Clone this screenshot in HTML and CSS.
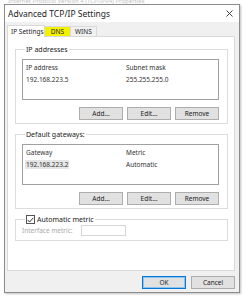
FILE: index.html
```html
<!DOCTYPE html>
<html>
<head>
<meta charset="utf-8">
<link rel="stylesheet" href="styles.css">
</head>
<body>
<div class="desk">
  <div class="parent-title">Internet Protocol Version 4 (TCP/IPv4) Properties</div>
  <div class="dialog">
    <div class="titlebar">
      <span class="title">Advanced TCP/IP Settings</span>
      <svg class="close" width="7" height="7" viewBox="0 0 7 7"><path d="M0.5 0.5 L6.5 6.5 M6.5 0.5 L0.5 6.5" stroke="#333" stroke-width="0.9"/></svg>
    </div>
    <div class="client">
      <div class="tabs">
        <div class="tab active">IP Settings</div>
        <div class="tab dns">DNS</div>
        <div class="tab">WINS</div>
      </div>
      <div class="panel">
        <fieldset class="group g1">
          <legend>IP addresses</legend>
          <div class="list">
            <div class="row head"><span class="c1">IP address</span><span class="c2">Subnet mask</span></div>
            <div class="row"><span class="c1">192.168.223.5</span><span class="c2">255.255.255.0</span></div>
          </div>
          <div class="btns">
            <button class="btn">Add...</button>
            <button class="btn">Edit...</button>
            <button class="btn">Remove</button>
          </div>
        </fieldset>
        <fieldset class="group g2">
          <legend>Default gateways:</legend>
          <div class="list">
            <div class="row head"><span class="c1">Gateway</span><span class="c2">Metric</span></div>
            <div class="row"><span class="c1"><span class="sel">192.168.223.2</span></span><span class="c2">Automatic</span></div>
          </div>
          <div class="btns">
            <button class="btn">Add...</button>
            <button class="btn">Edit...</button>
            <button class="btn">Remove</button>
          </div>
        </fieldset>
        <fieldset class="group g3">
          <legend><span class="chk"><svg width="7" height="6" viewBox="0 0 7 6"><path d="M0.7 3 L2.6 5 L6.3 0.8" fill="none" stroke="#333" stroke-width="1"/></svg></span>Automatic metric</legend>
          <div class="metric">
            <span class="mlabel">Interface metric:</span>
            <span class="minput"></span>
          </div>
        </fieldset>
      </div>
      <div class="footer">
        <button class="btn ok">OK</button>
        <button class="btn">Cancel</button>
      </div>
    </div>
  </div>
</div>
</body>
</html>
```

FILE: styles.css
```css
* { box-sizing: border-box; }
html, body { margin: 0; padding: 0; }
body {
  background: #fff;
  font-family: "Noto Sans", "DejaVu Sans", sans-serif;
  width: 251px;
  height: 300px;
  overflow: hidden;
}
.desk {
  position: relative;
  height: 300px;
  padding: 4px 0 0 4px;
  background: #fff;
}
.parent-title {
  position: absolute;
  top: -2px;
  left: 8px;
  font-size: 6px;
  line-height: 6px;
  color: #c4c4c4;
  white-space: nowrap;
}
.dialog {
  position: relative;
  width: 236px;
  height: 289px;
  border: 1px solid #8c8c8c;
  background: #f0f0f0;
  box-shadow: 1px 1px 2px rgba(0,0,0,0.25);
  display: flex;
  flex-direction: column;
}
.titlebar {
  height: 17px;
  background: #fff;
  display: flex;
  align-items: center;
  justify-content: space-between;
  padding: 0 6px 1px 3px;
}
.title {
  font-size: 8.5px;
  color: #222;
}
.close { display: block; }
.client {
  flex: 1;
  padding: 3px 4px 3px 2px;
  display: flex;
  flex-direction: column;
}
.tabs {
  display: flex;
  align-items: flex-end;
  height: 11px;
  position: relative;
  z-index: 1;
}
.tab {
  font-size: 6.5px;
  color: #222;
  height: 10px;
  line-height: 9px;
  padding: 0 4px;
  border: 1px solid #d9d9d9;
  border-bottom: none;
  background: #f0f0f0;
  margin-left: -1px;
  white-space: nowrap;
}
.tab.active {
  height: 12px;
  margin-left: 0;
  margin-bottom: -1px;
  background: #fff;
  line-height: 11px;
  padding: 0 3px;
  width: 38px;
}
.tab.dns {
  background: #f2f200;
  width: 27px;
  text-align: center;
}
.panel {
  height: 235px;
  background: #fff;
  border: 1px solid #d9d9d9;
  padding: 8px 6px 0 7px;
  display: flex;
  flex-direction: column;
}
.group {
  margin: 0;
  border: 1px solid #dcdcdc;
  padding: 0 8px 0 6px;
  min-width: 0;
}
.group legend {
  font-size: 7px;
  color: #222;
  padding: 0 1px;
  margin-left: 3px;
  line-height: 9px;
  display: flex;
  align-items: center;
}
.g2 { margin-top: 6px; }
.g3 { margin-top: 6px; }
.list {
  margin-top: 5px;
  height: 41px;
  border: 1px solid #a0a0a0;
  padding: 2px 0 0 3px;
  font-size: 6.5px;
  color: #333;
}
.row {
  display: flex;
  height: 11px;
  align-items: center;
}
.row.head { height: 10px; }
.row + .row { margin-top: 2px; }
.c1 { width: 100px; }
.c2 { flex: 1; }
.sel {
  background: #e5e5e5;
  padding: 0 1px;
  margin-left: -1px;
}
.btns {
  display: flex;
  justify-content: flex-end;
  gap: 4px;
  margin: 7px 0 3px;
}
.btn {
  width: 44px;
  height: 13px;
  padding: 0;
  margin: 0;
  font-family: "Noto Sans", "DejaVu Sans", sans-serif;
  font-size: 6.5px;
  color: #222;
  background: #e1e1e1;
  border: 1px solid #adadad;
  border-radius: 0;
  line-height: 11px;
}
.chk {
  width: 9px;
  height: 9px;
  border: 1px solid #555;
  background: #fff;
  display: inline-flex;
  align-items: center;
  justify-content: center;
  margin-right: 2px;
}
.chk svg { display: block; }
.metric {
  display: flex;
  align-items: center;
  height: 16px;
  padding-bottom: 3px;
}
.mlabel {
  font-size: 6.5px;
  color: #a8a8a8;
  width: 59px;
}
.minput {
  width: 45px;
  height: 11px;
  border: 1px solid #d6d6d6;
  background: #fff;
}
.footer {
  display: flex;
  justify-content: flex-end;
  gap: 5px;
  margin-top: 5px;
}
.btn.ok {
  border: 1px solid #0078d7;
  box-shadow: inset 0 0 0 1px #8cc4ee;
}
```
